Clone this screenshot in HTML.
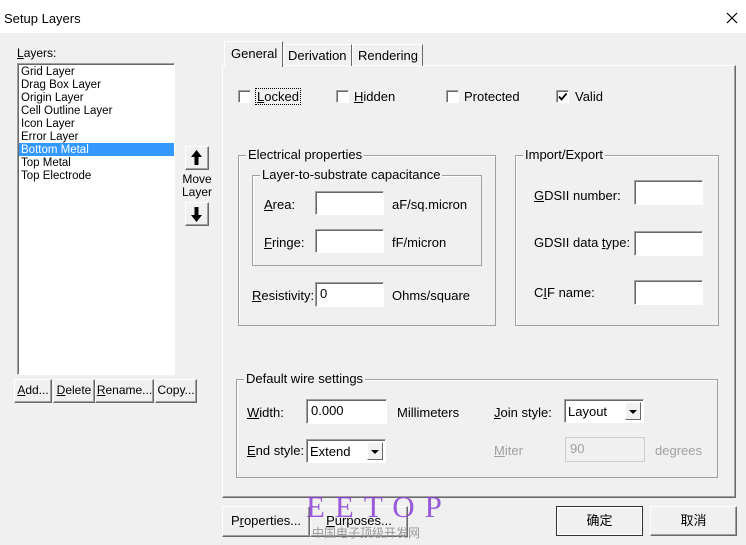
<!DOCTYPE html>
<html><head><style>
*{margin:0;padding:0;box-sizing:border-box}
body{width:746px;height:545px;background:#f0f0f0;font-family:"Liberation Sans","Noto Sans CJK SC",sans-serif;font-size:13px;color:#000;position:relative;overflow:hidden}
.a{position:absolute;white-space:nowrap}
.title{left:0;top:0;width:746px;height:33px;background:#fff;}
.inp{position:absolute;background:#fff;border:1px solid;border-color:#a0a0a0 #fff #fff #a0a0a0;box-shadow:inset 1px 1px 0 #696969;padding:3px 4px;font-size:13px}
.grp{position:absolute;border:1px solid #a0a0a0;box-shadow:1px 1px 0 #fff inset}
.grp>span{position:absolute;top:-9px;left:7px;background:#f0f0f0;padding:0 2px}
.btn{position:absolute;border:1px solid;border-color:#fff #696969 #696969 #fff;box-shadow:inset -1px -1px 0 #a0a0a0;background:#f0f0f0;text-align:center;font-size:12px}
.cb{position:absolute;width:13px;height:13px;background:#fff;border:1px solid;border-color:#a0a0a0 #fff #fff #a0a0a0;box-shadow:inset 1px 1px 0 #696969}
u{text-decoration:underline}
.li{position:absolute;left:21px;font-size:11.5px}
.sel{position:absolute;background:#fff;border:1px solid;border-color:#a0a0a0 #fff #fff #a0a0a0;box-shadow:inset 1px 1px 0 #696969;padding:3px 3px;font-size:13px}
.dd{position:absolute;right:2px;top:2px;bottom:2px;width:16px;background:#f0f0f0;border:1px solid;border-color:#fff #696969 #696969 #fff}
.dd:after{content:"";position:absolute;left:3px;top:7px;border:4px solid transparent;border-top:4px solid #000;border-bottom:0}
</style></head><body>
<div class="a title"></div>
<div class="a" style="left:4px;top:11px;font-size:13px">Setup Layers</div>
<svg class="a" style="left:726px;top:12px" width="12" height="12"><path d="M1 1L11 11M11 1L1 11" stroke="#000" stroke-width="1.2"/></svg>

<div class="a" style="left:17px;top:46px;font-size:12px"><u>L</u>ayers:</div>
<div class="a" style="left:17px;top:63px;width:158px;height:312px;background:#fff;border:1px solid;border-color:#a0a0a0 #fff #fff #a0a0a0;box-shadow:inset 1px 1px 0 #696969"></div>
<div class="li" style="top:66px">Grid Layer</div>
<div class="li" style="top:79px">Drag Box Layer</div>
<div class="li" style="top:92px">Origin Layer</div>
<div class="li" style="top:105px">Cell Outline Layer</div>
<div class="li" style="top:118px">Icon Layer</div>
<div class="li" style="top:131px">Error Layer</div>
<div class="a" style="left:19px;top:143px;width:155px;height:13px;background:#3399ff"></div>
<div class="li" style="top:144px;color:#fff">Bottom Metal</div>
<div class="li" style="top:157px">Top Metal</div>
<div class="li" style="top:170px">Top Electrode</div>

<div class="btn" style="left:185px;top:146px;width:24px;height:24px"><svg width="22" height="22"><path d="M10.5 3L5 10H8.5V18H12.5V10H16Z" fill="#000"/></svg></div>
<div class="a" style="left:182px;top:173px;font-size:12px;text-align:center;line-height:13px">Move<br>Layer</div>
<div class="btn" style="left:185px;top:202px;width:24px;height:24px"><svg width="22" height="22"><path d="M10.5 19L5 12H8.5V4H12.5V12H16Z" fill="#000"/></svg></div>

<div class="btn" style="left:14px;top:379px;width:38px;height:24px;line-height:21px"><u>A</u>dd...</div>
<div class="btn" style="left:53px;top:379px;width:42px;height:24px;line-height:21px"><u>D</u>elete</div>
<div class="btn" style="left:95px;top:379px;width:59px;height:24px;line-height:21px"><u>R</u>ename...</div>
<div class="btn" style="left:155px;top:379px;width:42px;height:24px;line-height:21px">Copy...</div>

<div class="a" style="left:222px;top:65px;width:514px;height:433px;border:1px solid;border-color:#fff #696969 #696969 #fff;box-shadow:inset -1px -1px 0 #a0a0a0"></div>
<div class="a" style="left:224px;top:41px;width:59px;height:26px;background:#f0f0f0;border:1px solid;border-color:#fff #696969 transparent #fff;border-bottom:0;padding:4px 6px">General</div>
<div class="a" style="left:283px;top:44px;width:69px;height:22px;border:1px solid;border-color:#fff #696969 transparent #fff;border-bottom:0;padding:3px 4px">Derivation</div>
<div class="a" style="left:352px;top:44px;width:71px;height:22px;border:1px solid;border-color:#fff #696969 transparent #fff;border-bottom:0;padding:3px 5px">Rendering</div>

<div class="cb" style="left:238px;top:90px"></div>
<div class="a" style="left:255px;top:88px;border:1px dotted #000;padding:0 1px"><u>L</u>ocked</div>
<div class="cb" style="left:336px;top:90px"></div>
<div class="a" style="left:354px;top:89px"><u>H</u>idden</div>
<div class="cb" style="left:446px;top:90px"></div>
<div class="a" style="left:464px;top:89px">Protected</div>
<div class="cb" style="left:556px;top:90px"><svg class="a" style="left:1px;top:1px" width="10" height="10"><path d="M1 4.5L3.5 7.5L8.5 1.5" stroke="#000" stroke-width="1.8" fill="none"/></svg></div>
<div class="a" style="left:575px;top:89px">Valid</div>

<div class="grp" style="left:238px;top:155px;width:258px;height:171px"><span>Electrical properties</span></div>
<div class="grp" style="left:252px;top:175px;width:230px;height:91px"><span>Layer-to-substrate capacitance</span></div>
<div class="a" style="left:264px;top:197px"><u>A</u>rea:</div>
<div class="inp" style="left:315px;top:191px;width:69px;height:24px"></div>
<div class="a" style="left:392px;top:197px">aF/sq.micron</div>
<div class="a" style="left:264px;top:235px"><u>F</u>ringe:</div>
<div class="inp" style="left:315px;top:229px;width:69px;height:24px"></div>
<div class="a" style="left:392px;top:235px">fF/micron</div>
<div class="a" style="left:252px;top:288px"><u>R</u>esistivity:</div>
<div class="inp" style="left:315px;top:282px;width:69px;height:25px">0</div>
<div class="a" style="left:392px;top:288px">Ohms/square</div>

<div class="grp" style="left:515px;top:155px;width:204px;height:171px"><span>Import/Export</span></div>
<div class="a" style="left:534px;top:188px"><u>G</u>DSII number:</div>
<div class="inp" style="left:634px;top:180px;width:69px;height:25px"></div>
<div class="a" style="left:534px;top:235px">GDSII data <u>t</u>ype:</div>
<div class="inp" style="left:634px;top:231px;width:69px;height:25px"></div>
<div class="a" style="left:534px;top:285px">C<u>I</u>F name:</div>
<div class="inp" style="left:634px;top:280px;width:69px;height:25px"></div>

<div class="grp" style="left:236px;top:379px;width:482px;height:99px"><span>Default wire settings</span></div>
<div class="a" style="left:247px;top:405px"><u>W</u>idth:</div>
<div class="inp" style="left:306px;top:399px;width:81px;height:25px">0.000</div>
<div class="a" style="left:397px;top:405px">Millimeters</div>
<div class="a" style="left:494px;top:405px"><u>J</u>oin style:</div>
<div class="sel" style="left:564px;top:399px;width:80px;height:24px;padding-top:4px">Layout<div class="dd"></div></div>
<div class="a" style="left:247px;top:443px"><u>E</u>nd style:</div>
<div class="sel" style="left:306px;top:439px;width:80px;height:24px;padding-top:4px">Extend<div class="dd"></div></div>
<div class="a" style="left:494px;top:443px;color:#a0a0a0"><u>M</u>iter</div>
<div class="a" style="left:565px;top:437px;width:80px;height:25px;border:1px solid #ccc;background:#f0f0f0;padding:3px 4px;color:#a0a0a0">90</div>
<div class="a" style="left:655px;top:443px;color:#a0a0a0">degrees</div>

<div class="btn" style="left:222px;top:506px;width:88px;height:31px;line-height:28px;font-size:13px">P<u>r</u>operties...</div>
<div class="btn" style="left:310px;top:506px;width:98px;height:31px;line-height:28px;font-size:13px"><u>P</u>urposes...</div>
<div class="a" style="left:306px;top:489px;font-family:'Liberation Serif',serif;font-size:31px;color:#8a3fd8;letter-spacing:10px;opacity:.85">EETOP</div>
<div class="a" style="left:312px;top:524px;font-size:12px;color:#999">中国电子顶级开发网</div>
<div class="btn" style="left:556px;top:506px;width:87px;height:30px;line-height:27px;font-size:13px;border:1px solid #333;box-shadow:inset 0 0 0 1px #fff">确定</div>
<div class="btn" style="left:650px;top:506px;width:87px;height:30px;line-height:27px;font-size:13px">取消</div>
</body></html>
